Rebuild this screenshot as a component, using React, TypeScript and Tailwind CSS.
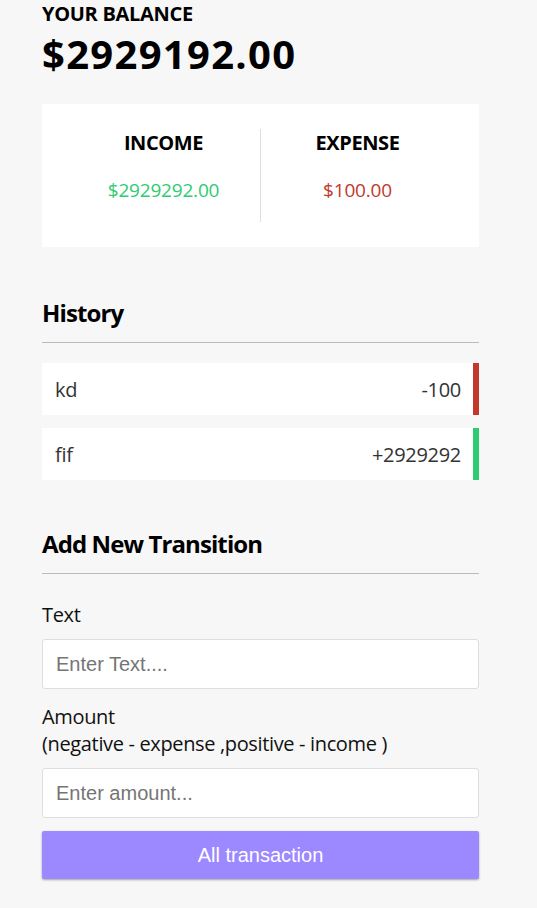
const history = [
  { id: 1, text: 'kd', amount: -100 },
  { id: 2, text: 'fif', amount: 2929292 },
]

export default function App() {
  return (
    <div className="min-h-screen w-full bg-[#f7f7f7] font-['Open_Sans',sans-serif] text-black">
      <div className="ml-[42px] w-[437px] pb-[29px]">
        {/* Balance */}
        <h4 className="text-[20px] font-bold leading-[27px] tracking-[-0.3px] uppercase">Your Balance</h4>
        <h1 className="mt-[3px] text-[40px] font-bold leading-[48px] tracking-[1.3px]">$2929192.00</h1>

        {/* Income / Expense */}
        <div className="mt-[26px] flex bg-white p-[25px]">
          <div className="h-[93px] flex-1 border-r border-[#dedede] text-center">
            <h4 className="text-[20px] font-bold leading-[27px] tracking-[-0.4px] uppercase">Income</h4>
            <p className="mt-[21px] text-[19px] leading-[27px] tracking-[-0.2px] text-[#2ecc71]">$2929292.00</p>
          </div>
          <div className="h-[93px] flex-1 text-center">
            <h4 className="text-[20px] font-bold leading-[27px] tracking-[-0.4px] uppercase">Expense</h4>
            <p className="mt-[21px] text-[19px] leading-[27px] tracking-[-0.2px] text-[#c0392b]">$100.00</p>
          </div>
        </div>

        {/* History */}
        <h3 className="mt-[50px] border-b border-[#bbb] pb-[13px] text-[24px] font-bold leading-[32px] tracking-[-0.9px]">
          History
        </h3>
        <ul className="mt-[20px] flex flex-col gap-[13px]">
          {history.map((item) => (
            <li
              key={item.id}
              className={`flex h-[52px] items-center justify-between border-r-[6px] bg-white pl-[13px] pr-[12px] text-[20px] leading-[27px] tracking-[-0.3px] text-[#333] ${
                item.amount < 0 ? 'border-[#c0392b]' : 'border-[#2ecc71]'
              }`}
            >
              <span>{item.text}</span>
              <span>{item.amount < 0 ? `-${Math.abs(item.amount)}` : `+${item.amount}`}</span>
            </li>
          ))}
        </ul>

        {/* Add new */}
        <h3 className="mt-[48px] border-b border-[#bbb] pb-[13px] text-[24px] font-bold leading-[32px] tracking-[-0.9px]">
          Add New Transition
        </h3>
        <form onSubmit={(e) => e.preventDefault()}>
          <label className="mt-[27px] block text-[20px] leading-[27px] tracking-[-0.35px] text-[#111]">Text</label>
          <input
            type="text"
            placeholder="Enter Text...."
            className="mt-[11px] block h-[50px] w-full rounded-[3px] border border-[#dedede] bg-white px-[13px] font-['Liberation_Sans',Arial,sans-serif] text-[20px] placeholder:text-[#757575] focus:outline-none"
          />
          <label className="mt-[14px] block text-[20px] leading-[27px] tracking-[-0.35px] text-[#111]">
            Amount
            <br />
            (negative - expense ,positive - income )
          </label>
          <input
            type="number"
            placeholder="Enter amount..."
            className="mt-[11px] block h-[50px] w-full rounded-[3px] border border-[#dedede] bg-white px-[13px] font-['Liberation_Sans',Arial,sans-serif] text-[20px] placeholder:text-[#757575] focus:outline-none"
          />
          <button
            type="submit"
            className="mt-[13px] block h-[48px] w-full rounded-[2px] bg-[#9c88ff] font-['Liberation_Sans',Arial,sans-serif] text-[20px] text-white shadow-[0_1px_3px_rgba(0,0,0,0.12),0_1px_2px_rgba(0,0,0,0.24)]"
          >
            All transaction
          </button>
        </form>
      </div>
    </div>
  )
}
